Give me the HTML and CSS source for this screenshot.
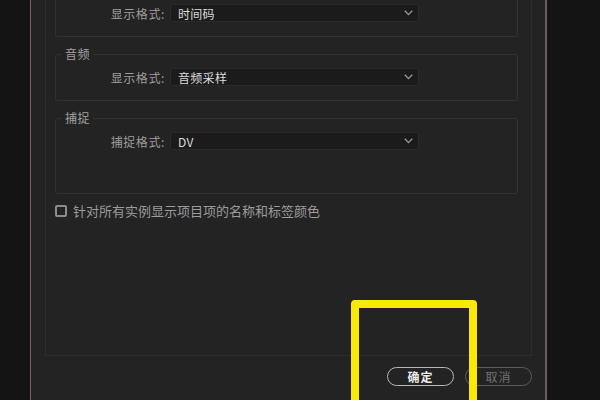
FILE: index.html
```html
<!DOCTYPE html>
<html lang="zh-CN">
<head>
    <meta charset="UTF-8">
    <title>项目设置</title>
    <link rel="stylesheet" href="styles.css">
</head>
<body>
    <div class="dialog">
        <div class="panel">
            <!-- 视频 (title scrolled out of view) -->
            <fieldset class="group first">
                <div class="row">
                    <span class="label">显示格式:</span>
                    <div class="select"><span>时间码</span><svg width="9" height="6" viewBox="0 0 9 6"><polyline points="0.8,0.8 4.5,4.6 8.2,0.8" fill="none" stroke="#9a9a9a" stroke-width="1.3"/></svg></div>
                </div>
            </fieldset>

            <!-- 音频 -->
            <fieldset class="group">
                <legend>音频</legend>
                <div class="row">
                    <span class="label">显示格式:</span>
                    <div class="select"><span>音频采样</span><svg width="9" height="6" viewBox="0 0 9 6"><polyline points="0.8,0.8 4.5,4.6 8.2,0.8" fill="none" stroke="#9a9a9a" stroke-width="1.3"/></svg></div>
                </div>
            </fieldset>

            <!-- 捕捉 -->
            <fieldset class="group tall">
                <legend>捕捉</legend>
                <div class="row">
                    <span class="label">捕捉格式:</span>
                    <div class="select"><span>DV</span><svg width="9" height="6" viewBox="0 0 9 6"><polyline points="0.8,0.8 4.5,4.6 8.2,0.8" fill="none" stroke="#9a9a9a" stroke-width="1.3"/></svg></div>
                </div>
            </fieldset>

            <label class="check">
                <span class="box"></span>
                <span>针对所有实例显示项目项的名称和标签颜色</span>
            </label>
        </div>

        <div class="buttons">
            <button class="btn primary">确定</button>
            <button class="btn disabled">取消</button>
        </div>
    </div>

    <!-- highlight marker -->
    <div class="highlight"></div>
</body>
</html>
```

FILE: styles.css
```css
body {
    margin: 0;
    width: 600px;
    height: 400px;
    overflow: hidden;
    background-color: #141414;
    font-family: "Noto Sans CJK SC", "Noto Sans", sans-serif;
    position: relative;
}

.dialog {
    margin-left: 30px;
    width: 517px;
    height: 400px;
    box-sizing: border-box;
    background-color: #232323;
    border-left: 1px solid #7a6064;
    border-right: 2px solid #6e5a5d;
    padding: 0 13px 0 14px;
    overflow: hidden;
}

.panel {
    margin-top: -15px;
    height: 371px;
    box-sizing: border-box;
    border: 1px solid #2e2e2e;
    padding: 10px 13px 0 9px;
}

.group {
    margin: 0 0 10px 0;
    border: 1px solid #323232;
    border-radius: 3px;
    padding: 7px 6px 14px 6px;
    min-width: 0;
}

.group.tall {
    padding-bottom: 43px;
}

.group legend {
    padding: 0 3px;
    font-size: 12px;
    line-height: 14px;
    color: #a2a2a2;
    letter-spacing: 0.5px;
}

.row {
    display: flex;
    align-items: center;
    height: 18px;
}

.label {
    width: 103px;
    margin-right: 5px;
    text-align: right;
    font-size: 12px;
    letter-spacing: 0.6px;
    color: #9e9e9e;
}

.select {
    width: 249px;
    height: 18px;
    box-sizing: border-box;
    display: flex;
    align-items: center;
    justify-content: space-between;
    padding: 0 5px 0 7px;
    background-color: #1b1b1b;
    border: 1px solid #2a2a2a;
    border-radius: 3px;
    font-size: 12px;
    color: #dcdcdc;
    letter-spacing: 0.3px;
}

.check {
    display: flex;
    align-items: center;
    gap: 6px;
    height: 13px;
    font-size: 13px;
    color: #9c9c9c;
}

.box {
    width: 12px;
    height: 12px;
    box-sizing: border-box;
    border: 2px solid #8c8c8c;
    border-radius: 2px;
}

.buttons {
    display: flex;
    justify-content: flex-end;
    gap: 11px;
    margin-top: 11px;
}

.btn {
    width: 67px;
    height: 19px;
    padding: 0;
    background: transparent;
    border-radius: 10px;
    font-family: "Noto Sans CJK SC", "Noto Sans", sans-serif;
    font-size: 12px;
    line-height: 15px;
    letter-spacing: 1px;
}

.btn.primary {
    border: 1.5px solid #b8b8b8;
    color: #ececec;
    font-weight: bold;
}

.btn.disabled {
    border: 1.5px solid #5c5c5c;
    color: #727272;
}

/* yellow marker drawn over the dialog */
.highlight {
    position: absolute;
    left: 351px;
    top: 300px;
    width: 126px;
    height: 120px;
    box-sizing: border-box;
    border: 8px solid #f9ea05;
    border-radius: 4px;
}
```
